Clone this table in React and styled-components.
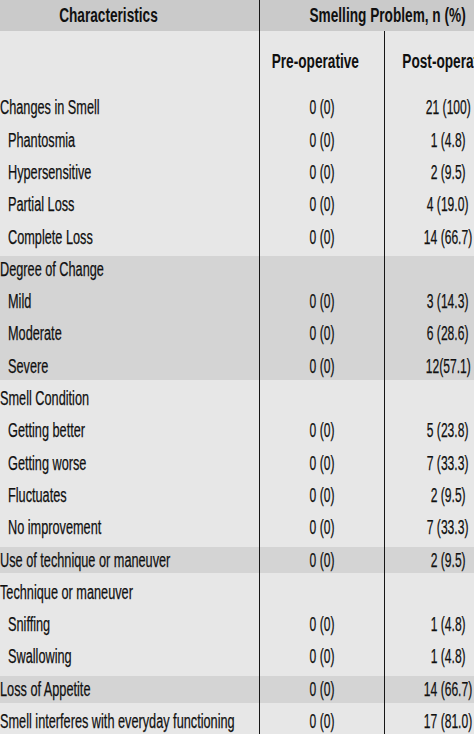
import React from 'react'
import styled, { createGlobalStyle } from 'styled-components'

const GlobalStyle = createGlobalStyle`
  html, body {
    margin: 0;
    padding: 0;
    overflow: hidden;
    background: #e7e7e7;
  }
  body {
    font-family: "Liberation Sans", Arial, sans-serif;
    color: #101010;
  }
`

const groups = [
  {
    rows: [
      { label: 'Changes in Smell', pre: '0 (0)', post: '21 (100)' },
      { label: 'Phantosmia', sub: true, pre: '0 (0)', post: '1 (4.8)' },
      { label: 'Hypersensitive', sub: true, pre: '0 (0)', post: '2 (9.5)' },
      { label: 'Partial Loss', sub: true, pre: '0 (0)', post: '4 (19.0)' },
      { label: 'Complete Loss', sub: true, pre: '0 (0)', post: '14 (66.7)' },
    ],
  },
  {
    shaded: true,
    rows: [
      { label: 'Degree of Change' },
      { label: 'Mild', sub: true, pre: '0 (0)', post: '3 (14.3)' },
      { label: 'Moderate', sub: true, pre: '0 (0)', post: '6 (28.6)' },
      { label: 'Severe', sub: true, pre: '0 (0)', post: '12(57.1)' },
    ],
  },
  {
    rows: [
      { label: 'Smell Condition' },
      { label: 'Getting better', sub: true, pre: '0 (0)', post: '5 (23.8)' },
      { label: 'Getting worse', sub: true, pre: '0 (0)', post: '7 (33.3)' },
      { label: 'Fluctuates', sub: true, pre: '0 (0)', post: '2 (9.5)' },
      { label: 'No improvement', sub: true, pre: '0 (0)', post: '7 (33.3)' },
    ],
  },
  {
    shaded: true,
    rows: [{ label: 'Use of technique or maneuver', pre: '0 (0)', post: '2 (9.5)' }],
  },
  {
    rows: [
      { label: 'Technique or maneuver' },
      { label: 'Sniffing', sub: true, pre: '0 (0)', post: '1 (4.8)' },
      { label: 'Swallowing', sub: true, pre: '0 (0)', post: '1 (4.8)' },
    ],
  },
  {
    shaded: true,
    rows: [{ label: 'Loss of Appetite', pre: '0 (0)', post: '14 (66.7)' }],
  },
  {
    rows: [{ label: 'Smell interferes with everyday functioning', pre: '0 (0)', post: '17 (81.0)' }],
  },
]

const App = () => {
  return (
    <>
      <GlobalStyle />
      <Table>
        <HeadRow>
          <Cell $divider $align='center' style={{ paddingRight: 43 }}>
            <Text $bold $origin='center'>Characteristics</Text>
          </Cell>
          <Cell $span={2} $align='center'>
            <Text $bold $origin='center'>Smelling Problem, n (%)</Text>
          </Cell>
        </HeadRow>
        <SubHeadRow>
          <Cell $divider />
          <Cell $divider $align='center' style={{ paddingRight: 14 }}>
            <Text $bold $origin='center'>Pre-operative</Text>
          </Cell>
          <Cell $align='center'>
            <Text $bold $origin='center'>Post-operative</Text>
          </Cell>
        </SubHeadRow>
        {groups.map((group, gi) => (
          <Band key={gi} $shaded={group.shaded}>
            {group.rows.map((row) => (
              <Row key={row.label}>
                <Cell $divider $indent={row.sub ? 8 : 0}>
                  <Text $origin='left'>{row.label}</Text>
                </Cell>
                <Cell $divider $align='center'>
                  {row.pre && <Text $num $origin='center'>{row.pre}</Text>}
                </Cell>
                <Cell $align='center' style={{ paddingRight: 4 }}>
                  {row.post && <Text $num $origin='center'>{row.post}</Text>}
                </Cell>
              </Row>
            ))}
          </Band>
        ))}
      </Table>
    </>
  )
}

export default App

const Table = styled.div`
  width: 100%;
  overflow: hidden;
`

const columns = `
  display: grid;
  grid-template-columns: 260px 125px 130px;
`

const HeadRow = styled.div`
  ${columns}
  height: 31px;
  background: #cacaca;
`

const SubHeadRow = styled.div`
  ${columns}
  height: 61px;
`

const Band = styled.div`
  background: ${(p) =>
    p.$shaded
      ? 'linear-gradient(to bottom, transparent 3.5px, #d4d4d4 3.5px, #d4d4d4 calc(100% - 3px), transparent calc(100% - 3px))'
      : 'transparent'};
`

const Row = styled.div`
  ${columns}
  height: 32.3px;
`

const Cell = styled.div`
  box-sizing: border-box;
  display: flex;
  align-items: center;
  justify-content: ${(p) => (p.$align === 'center' ? 'center' : 'flex-start')};
  grid-column: span ${(p) => p.$span || 1};
  padding-left: ${(p) => p.$indent || 0}px;
  border-right: ${(p) => (p.$divider ? '1.5px solid #161616' : 'none')};
  min-width: 0;
`

const Text = styled.span`
  display: inline-block;
  white-space: nowrap;
  font-size: 19.5px;
  line-height: 1;
  font-weight: ${(p) => (p.$bold ? 700 : 400)};
  transform: scaleX(${(p) => (p.$bold ? 0.7 : p.$num ? 0.62 : 0.652)});
  transform-origin: ${(p) => p.$origin || 'left'};
  -webkit-text-stroke: ${(p) => (p.$bold ? '0' : '0.25px')};
`
